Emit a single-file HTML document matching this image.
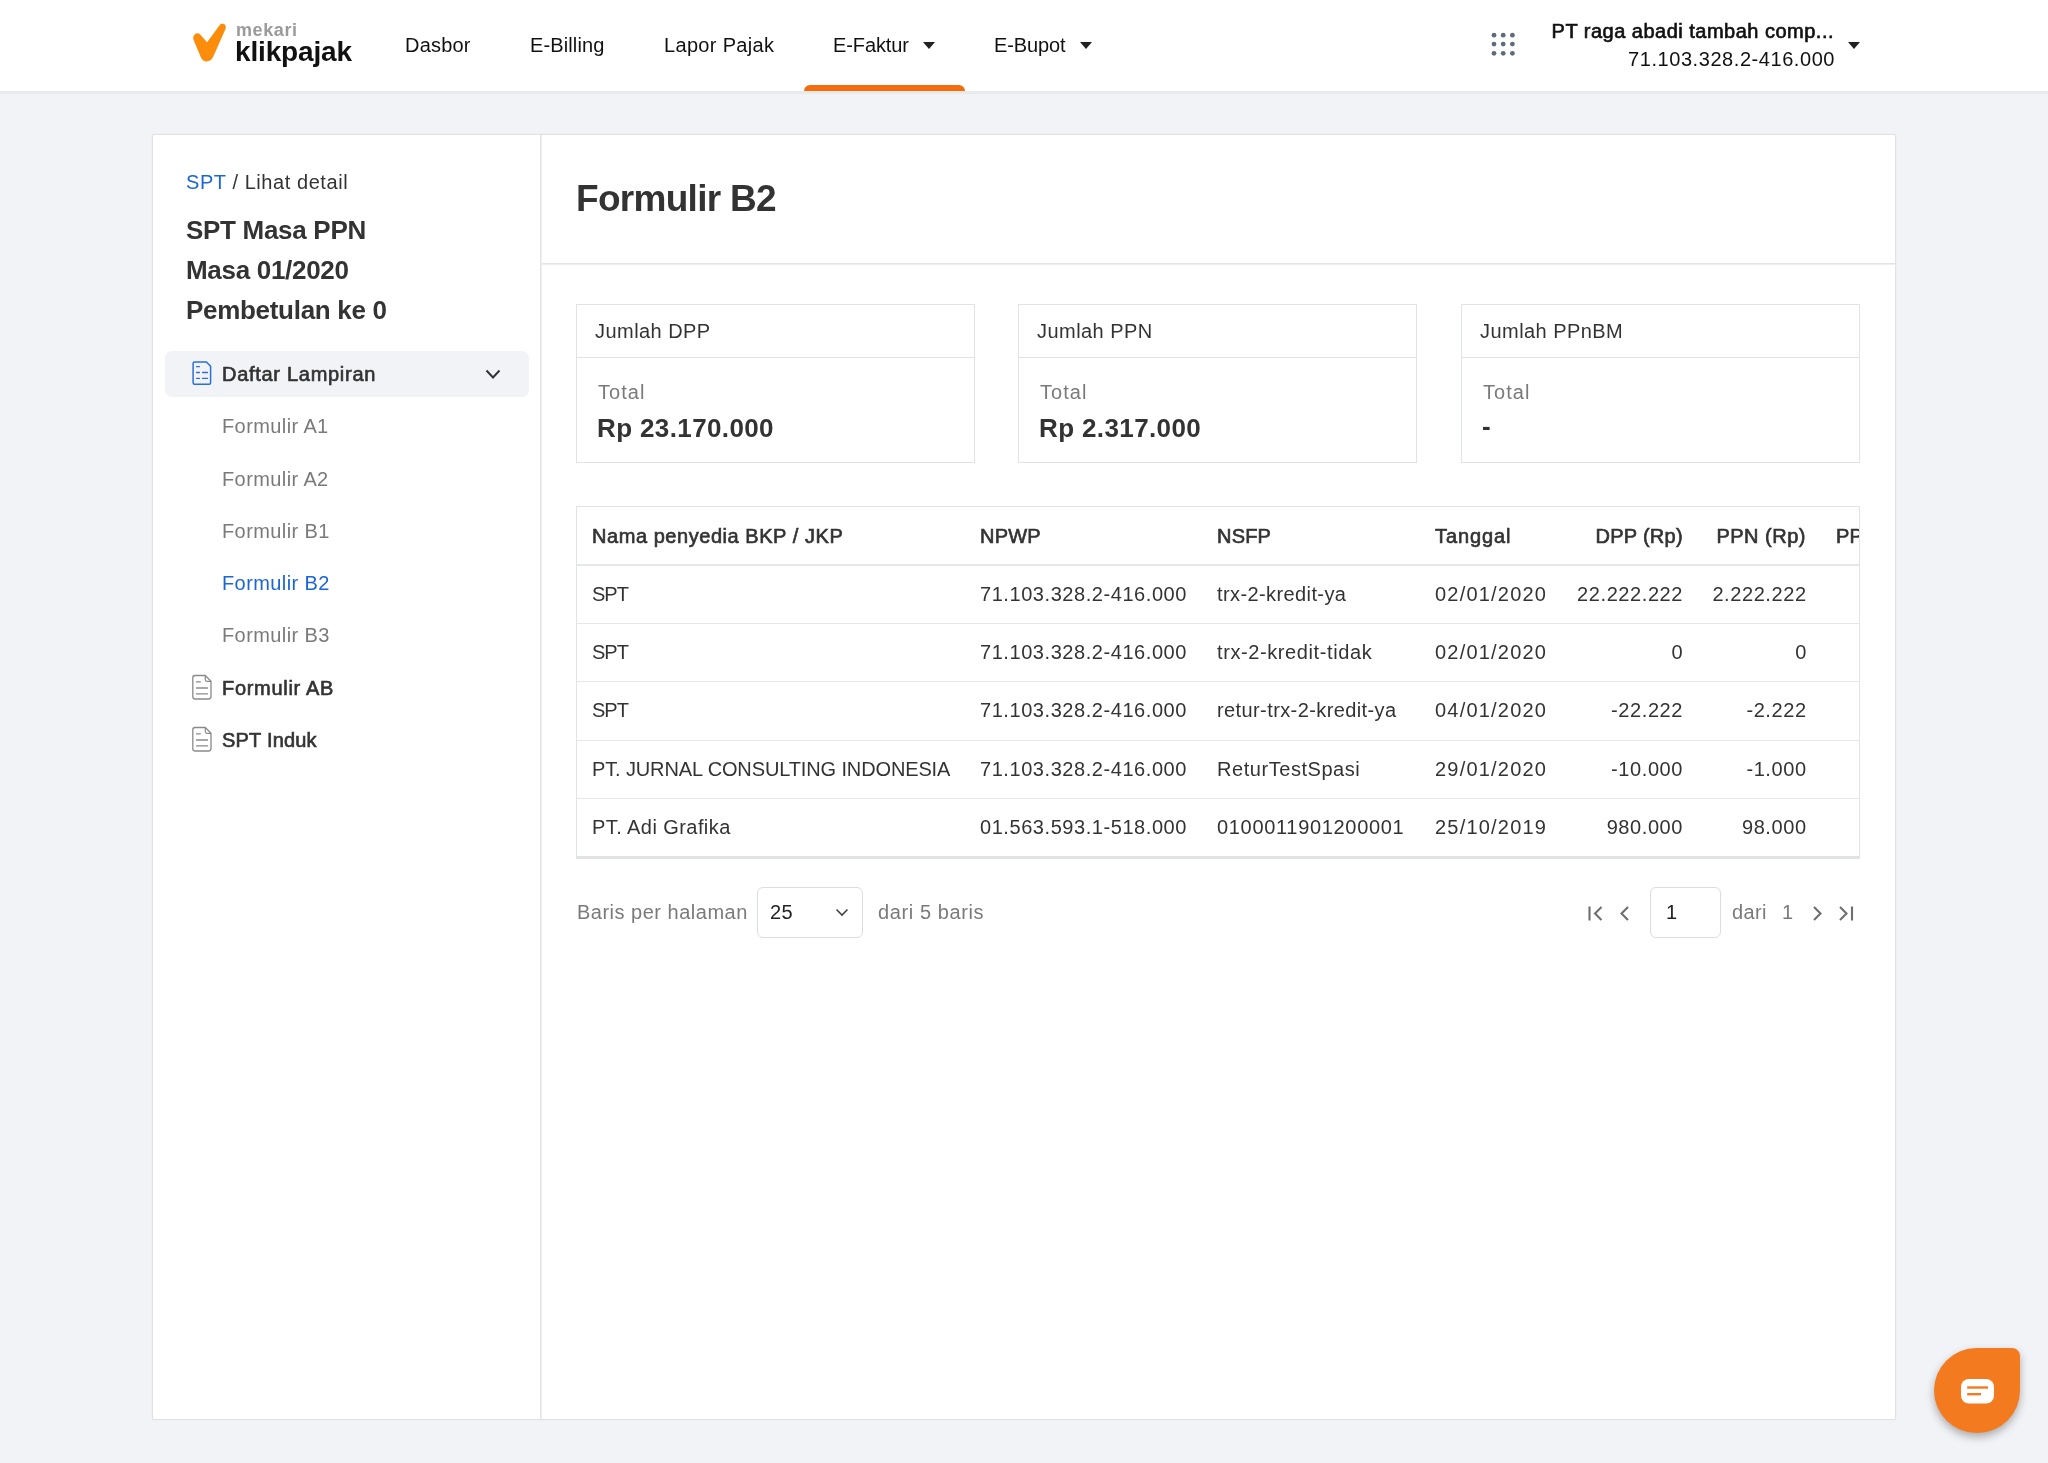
<!DOCTYPE html>
<html>
<head>
<meta charset="utf-8">
<style>
html,body{margin:0;padding:0}
body{width:2048px;height:1463px;background:#f2f3f6;position:relative;overflow:hidden;font-family:"Liberation Sans",sans-serif;color:#333}
.a{position:absolute;white-space:nowrap}
.t20{font-size:20px;line-height:20px}
.t26{font-size:26px;line-height:26px}
.b{font-weight:700}
.m{-webkit-text-stroke:0.65px currentColor}
#hdr{position:absolute;left:0;top:0;width:2048px;height:91px;background:#fff;box-shadow:0 1px 3px rgba(0,0,0,.08)}
#hdrline{position:absolute;left:0;top:91px;width:2048px;height:3px;background:#e9eaec}
.nav{color:#111}
.caret{position:absolute;width:0;height:0;border-left:6.5px solid transparent;border-right:6.5px solid transparent;border-top:7px solid #222}
#card{position:absolute;left:152px;top:134px;width:1742px;height:1284px;background:#fff;border:1px solid #e1e2e4;border-radius:2px;box-shadow:0 0 1px rgba(0,0,0,.12)}
#side{position:absolute;left:540px;top:135px;width:1px;height:1284px;background:#e3e4e6;border-right:1px solid #eceef0}
#mhdr{position:absolute;left:542px;top:263px;width:1353px;height:1px;background:#e3e4e6;border-bottom:1px solid #eceef0}
.sc{position:absolute;top:304px;width:397px;height:157px;border:1px solid #e2e3e5;background:#fff}
.sc .h{position:absolute;left:0;top:0;width:397px;height:52px;border-bottom:1px solid #e2e3e5}
.gray{color:#7a7a7a}
.blue{color:#1a66d6}
#tbl{position:absolute;left:576px;top:506px;width:1282px;height:349px;border:1px solid #e2e3e5;border-bottom:3px solid #e2e3e5;overflow:hidden}
.rl{position:absolute;left:577px;width:1282px;height:2px;background:#e6e7e9}
.th{color:#333;letter-spacing:0.2px}
.td{color:#333;letter-spacing:0.3px}
.box{position:absolute;border:1px solid #dcdde0;border-radius:6px;background:#fff}
</style>
</head>
<body>
<div id="root" style="position:absolute;left:0;top:0;width:2048px;height:1463px;will-change:transform">
<div id="hdr"></div>
<div id="hdrline"></div>

<!-- logo -->
<svg class="a" style="left:188px;top:18px" width="46" height="50" viewBox="188 18 46 50">
  <path d="M193.4 39.6 C192.4 34.6 197 31.6 200.2 34.4 L207.1 42.2 L219.6 25.2 C221.8 22.4 226.8 23.6 225.7 28.6 L213.2 56.8 C210.8 62.6 203.2 63.2 201 57.4 Z" fill="#fb8c0c"/>
</svg>
<div class="a b" style="left:236px;top:21px;font-size:18px;line-height:18px;color:#9a9a9a;letter-spacing:0.6px">mekari</div>
<div class="a b" style="left:235px;top:38px;font-size:28px;line-height:28px;color:#111;letter-spacing:-0.15px">klikpajak</div>

<div class="a t20 nav" style="left:405px;top:35px;letter-spacing:0.2px">Dasbor</div>
<div class="a t20 nav" style="left:530px;top:35px;letter-spacing:0.12px">E-Billing</div>
<div class="a t20 nav" style="left:664px;top:35px;letter-spacing:0.33px">Lapor Pajak</div>
<div class="a t20 nav" style="left:833px;top:35px;letter-spacing:-0.1px">E-Faktur</div>
<div class="caret" style="left:923px;top:42px"></div>
<div class="a t20 nav" style="left:994px;top:35px;letter-spacing:-0.13px">E-Bupot</div>
<div class="caret" style="left:1080px;top:42px"></div>
<div class="a" style="left:804px;top:85px;width:161px;height:6px;background:#f56c0c;border-radius:6px 6px 0 0"></div>

<!-- grid dots -->
<svg class="a" style="left:1488px;top:30px" width="30" height="30" viewBox="1488 30 30 30">
  <g fill="#5f6b7b">
    <circle cx="1494" cy="35.2" r="2.4"/><circle cx="1503.2" cy="35.2" r="2.4"/><circle cx="1512.4" cy="35.2" r="2.4"/>
    <circle cx="1494" cy="44.1" r="2.4"/><circle cx="1503.2" cy="44.1" r="2.4"/><circle cx="1512.4" cy="44.1" r="2.4"/>
    <circle cx="1494" cy="53.3" r="2.4"/><circle cx="1503.2" cy="53.3" r="2.4"/><circle cx="1512.4" cy="53.3" r="2.4"/>
  </g>
</svg>
<div class="a t20 m" style="right:214px;top:21px;color:#111;letter-spacing:0.49px">PT raga abadi tambah comp...</div>
<div class="a t20" style="right:213px;top:49px;color:#111;letter-spacing:0.56px">71.103.328.2-416.000</div>
<div class="caret" style="left:1848px;top:42px"></div>

<!-- card -->
<div id="card"></div>
<div id="side"></div>
<div id="mhdr"></div>


<!-- sidebar -->
<div class="a t20" style="left:186px;top:171.5px;letter-spacing:0.57px;color:#333"><span class="blue">SPT</span> / Lihat detail</div>
<div class="a b" style="left:186px;top:210px;font-size:26px;line-height:40px;color:#333;letter-spacing:-0.3px">SPT Masa PPN<br>Masa 01/2020<br>Pembetulan ke 0</div>
<div class="a" style="left:165px;top:351px;width:364px;height:46px;background:#f2f3f6;border-radius:7px"></div>
<svg class="a" style="left:190px;top:359px" width="24" height="28" viewBox="190 359 24 28">
  <path d="M194.6 362 H206.4 L210.6 366.3 V382.7 Q210.6 384.2 209.1 384.2 H194.6 Q193.1 384.2 193.1 382.7 V363.5 Q193.1 362 194.6 362 Z" fill="none" stroke="#2b6fd8" stroke-width="1.5" stroke-linejoin="round"/>
  <g stroke="#2b6fd8" stroke-width="1.3" stroke-linecap="round"><path d="M196.6 366.7 H199.4"/><path d="M196.6 372.5 H199.4 M202.6 372.5 H207.5"/><path d="M196.6 378.4 H199.4 M202.6 378.4 H207.5"/></g>
</svg>
<div class="a t20 m" style="left:222px;top:363.5px;color:#333;letter-spacing:0.71px">Daftar Lampiran</div>
<svg class="a" style="left:484px;top:366px" width="18" height="16" viewBox="484 366 18 16">
  <path d="M486.5 370.5 L493 377.5 L499.5 370.5" fill="none" stroke="#333" stroke-width="2"/>
</svg>
<div class="a t20 gray" style="left:222px;top:416.2px;letter-spacing:0.4px">Formulir A1</div>
<div class="a t20 gray" style="left:222px;top:468.5px;letter-spacing:0.4px">Formulir A2</div>
<div class="a t20 gray" style="left:222px;top:520.8px;letter-spacing:0.4px">Formulir B1</div>
<div class="a t20 blue" style="left:222px;top:573.1px;letter-spacing:0.4px">Formulir B2</div>
<div class="a t20 gray" style="left:222px;top:625.4px;letter-spacing:0.4px">Formulir B3</div>
<svg class="a" style="left:189px;top:672px" width="26" height="30" viewBox="189 672 26 30">
  <path d="M195 675.5 H205.3 L211 681.3 V696.5 Q211 699.0 208.5 699.0 H195.3 Q192.8 699.0 192.8 696.5 V677.7 Q192.8 675.5 195 675.5 Z" fill="none" stroke="#8a8a8a" stroke-width="1.3" stroke-linejoin="round"/>
  <path d="M205.3 675.5 V679.5 Q205.3 681.3 207 681.3 H211" fill="none" stroke="#8a8a8a" stroke-width="1.2"/>
  <g stroke="#8a8a8a" stroke-width="1.3" stroke-linecap="round"><path d="M196.5 681.8 H200.3"/><path d="M196.5 688.0 H207.5"/><path d="M196.5 693.9 H207.5"/></g>
</svg>
<div class="a t20 m" style="left:222px;top:677.9px;color:#333;letter-spacing:0.7px">Formulir AB</div>
<svg class="a" style="left:189px;top:724px" width="26" height="30" viewBox="189 724 26 30">
  <path d="M195 727.5 H205.3 L211 733.3 V748.5 Q211 751.0 208.5 751.0 H195.3 Q192.8 751.0 192.8 748.5 V729.7 Q192.8 727.5 195 727.5 Z" fill="none" stroke="#8a8a8a" stroke-width="1.3" stroke-linejoin="round"/>
  <path d="M205.3 727.5 V731.5 Q205.3 733.3 207 733.3 H211" fill="none" stroke="#8a8a8a" stroke-width="1.2"/>
  <g stroke="#8a8a8a" stroke-width="1.3" stroke-linecap="round"><path d="M196.5 733.8 H200.3"/><path d="M196.5 740.0 H207.5"/><path d="M196.5 745.9 H207.5"/></g>
</svg>
<div class="a t20 m" style="left:222px;top:729.9px;color:#333;letter-spacing:0.2px">SPT Induk</div>

<!-- main -->
<div class="a b" style="left:576px;top:179.7px;font-size:37px;line-height:37px;color:#333;letter-spacing:-0.7px">Formulir B2</div>

<div class="sc" style="left:576px"><div class="h"></div></div>
<div class="sc" style="left:1018px"><div class="h"></div></div>
<div class="sc" style="left:1461px"><div class="h"></div></div>
<div class="a t20" style="left:595px;top:321.4px;color:#333;letter-spacing:0.45px">Jumlah DPP</div>
<div class="a t20" style="left:1037px;top:321.4px;color:#333;letter-spacing:0.45px">Jumlah PPN</div>
<div class="a t20" style="left:1480px;top:321.4px;color:#333;letter-spacing:0.45px">Jumlah PPnBM</div>
<div class="a t20 gray" style="left:598px;top:382px;letter-spacing:1.05px">Total</div>
<div class="a t20 gray" style="left:1040px;top:382px;letter-spacing:1.05px">Total</div>
<div class="a t20 gray" style="left:1483px;top:382px;letter-spacing:1.05px">Total</div>
<div class="a t26 b" style="left:597px;top:414.7px;color:#333;letter-spacing:0.38px">Rp 23.170.000</div>
<div class="a t26 b" style="left:1039px;top:414.7px;color:#333;letter-spacing:0.38px">Rp 2.317.000</div>
<div class="a t26 b" style="left:1482px;top:412.5px;color:#333;letter-spacing:0.38px">-</div>

<!-- table -->
<div id="tbl"></div>
<div class="rl" style="top:564px"></div>
<div class="rl" style="top:623px;height:1px"></div>
<div class="rl" style="top:681px;height:1px"></div>
<div class="rl" style="top:740px;height:1px"></div>
<div class="rl" style="top:798px;height:1px"></div>
<div class="a t20 m th" style="left:592px;top:525.6px;letter-spacing:0.55px">Nama penyedia BKP / JKP</div>
<div class="a t20 m th" style="left:980px;top:525.6px">NPWP</div>
<div class="a t20 m th" style="left:1217px;top:525.6px">NSFP</div>
<div class="a t20 m th" style="left:1435px;top:525.6px;letter-spacing:0.9px">Tanggal</div>
<div class="a t20 m th" style="right:365px;top:525.6px;letter-spacing:0.3px">DPP (Rp)</div>
<div class="a t20 m th" style="right:242px;top:525.6px;letter-spacing:0.5px">PPN (Rp)</div>
<div class="a" style="left:1836px;top:520px;width:23px;height:30px;overflow:hidden"><div class="a t20 m th" style="left:0;top:5.5px">PPnBM (Rp)</div></div>
<div class="a t20 td" style="left:592px;top:583.8px;letter-spacing:-1.0px">SPT</div>
<div class="a t20 td" style="left:980px;top:583.8px;letter-spacing:0.56px">71.103.328.2-416.000</div>
<div class="a t20 td" style="left:1217px;top:583.8px;letter-spacing:0.4px">trx-2-kredit-ya</div>
<div class="a t20 td" style="left:1435px;top:583.8px;letter-spacing:1.2px">02/01/2020</div>
<div class="a t20 td" style="right:365px;top:583.8px;letter-spacing:0.58px">22.222.222</div>
<div class="a t20 td" style="right:241.4px;top:583.8px;letter-spacing:0.58px">2.222.222</div>
<div class="a t20 td" style="left:592px;top:642.1px;letter-spacing:-1.0px">SPT</div>
<div class="a t20 td" style="left:980px;top:642.1px;letter-spacing:0.56px">71.103.328.2-416.000</div>
<div class="a t20 td" style="left:1217px;top:642.1px;letter-spacing:0.6px">trx-2-kredit-tidak</div>
<div class="a t20 td" style="left:1435px;top:642.1px;letter-spacing:1.2px">02/01/2020</div>
<div class="a t20 td" style="right:365px;top:642.1px">0</div>
<div class="a t20 td" style="right:241.4px;top:642.1px">0</div>
<div class="a t20 td" style="left:592px;top:700.4px;letter-spacing:-1.0px">SPT</div>
<div class="a t20 td" style="left:980px;top:700.4px;letter-spacing:0.56px">71.103.328.2-416.000</div>
<div class="a t20 td" style="left:1217px;top:700.4px;letter-spacing:0.4px">retur-trx-2-kredit-ya</div>
<div class="a t20 td" style="left:1435px;top:700.4px;letter-spacing:1.2px">04/01/2020</div>
<div class="a t20 td" style="right:365px;top:700.4px;letter-spacing:0.58px">-22.222</div>
<div class="a t20 td" style="right:241.4px;top:700.4px;letter-spacing:0.58px">-2.222</div>
<div class="a t20 td" style="left:592px;top:758.7px;letter-spacing:-0.13px">PT. JURNAL CONSULTING INDONESIA</div>
<div class="a t20 td" style="left:980px;top:758.7px;letter-spacing:0.56px">71.103.328.2-416.000</div>
<div class="a t20 td" style="left:1217px;top:758.7px;letter-spacing:0.55px">ReturTestSpasi</div>
<div class="a t20 td" style="left:1435px;top:758.7px;letter-spacing:1.2px">29/01/2020</div>
<div class="a t20 td" style="right:365px;top:758.7px;letter-spacing:0.58px">-10.000</div>
<div class="a t20 td" style="right:241.4px;top:758.7px;letter-spacing:0.58px">-1.000</div>
<div class="a t20 td" style="left:592px;top:817.0px;letter-spacing:0.43px">PT. Adi Grafika</div>
<div class="a t20 td" style="left:980px;top:817.0px;letter-spacing:0.56px">01.563.593.1-518.000</div>
<div class="a t20 td" style="left:1217px;top:817.0px;letter-spacing:0.68px">0100011901200001</div>
<div class="a t20 td" style="left:1435px;top:817.0px;letter-spacing:1.2px">25/10/2019</div>
<div class="a t20 td" style="right:365px;top:817.0px;letter-spacing:0.58px">980.000</div>
<div class="a t20 td" style="right:241.4px;top:817.0px;letter-spacing:0.58px">98.000</div>

<!-- pagination -->
<div class="a t20 gray" style="left:577px;top:902.4px;letter-spacing:0.5px">Baris per halaman</div>
<div class="box" style="left:757px;top:887px;width:104px;height:49px"></div>
<div class="a t20" style="left:770px;top:902px;color:#222;letter-spacing:0.3px">25</div>
<svg class="a" style="left:832px;top:904px" width="20" height="16" viewBox="832 904 20 16">
  <path d="M836.5 909.5 L842 915 L847.5 909.5" fill="none" stroke="#444" stroke-width="1.6"/>
</svg>
<div class="a t20 gray" style="left:878px;top:902.4px;letter-spacing:0.6px">dari 5 baris</div>
<svg class="a" style="left:1584px;top:902px" width="30" height="24" viewBox="1584 902 30 24">
  <g fill="none" stroke="#6e6e6e" stroke-width="2.1">
    <path d="M1589.5 906.5 V920.5"/>
    <path d="M1601.5 907 L1595 913.5 L1601.5 920"/>
  </g>
</svg>
<svg class="a" style="left:1614px;top:902px" width="20" height="24" viewBox="1614 902 20 24">
  <path d="M1628 907 L1621.5 913.5 L1628 920" fill="none" stroke="#6e6e6e" stroke-width="2.1"/>
</svg>
<div class="box" style="left:1650px;top:887px;width:69px;height:49px"></div>
<div class="a t20" style="left:1666px;top:902px;color:#222">1</div>
<div class="a t20 gray" style="left:1732px;top:902.4px;letter-spacing:0.4px">dari</div>
<div class="a t20 gray" style="left:1782px;top:902.4px">1</div>
<svg class="a" style="left:1808px;top:902px" width="20" height="24" viewBox="1808 902 20 24">
  <path d="M1814 907 L1820.5 913.5 L1814 920" fill="none" stroke="#6e6e6e" stroke-width="2.1"/>
</svg>
<svg class="a" style="left:1834px;top:902px" width="26" height="24" viewBox="1834 902 26 24">
  <g fill="none" stroke="#6e6e6e" stroke-width="2.1">
    <path d="M1840 907 L1846.5 913.5 L1840 920"/>
    <path d="M1852 906.5 V920.5"/>
  </g>
</svg>

<!-- chat button -->
<div class="a" style="left:1934px;top:1348px;width:86px;height:85px;background:#f47a20;border-radius:43px 8px 43px 43px;box-shadow:0 4px 8px rgba(0,0,0,.3)"></div>
<svg class="a" style="left:1955px;top:1372px" width="44" height="40" viewBox="1955 1372 44 40">
  <rect x="1961" y="1379" width="33" height="24.5" rx="8" fill="#fff"/>
  <rect x="1967.2" y="1386.3" width="20.8" height="2.4" fill="#f47a20"/>
  <rect x="1967.2" y="1393" width="13.8" height="2.4" fill="#f47a20"/>
</svg>
</div>
</body>
</html>
